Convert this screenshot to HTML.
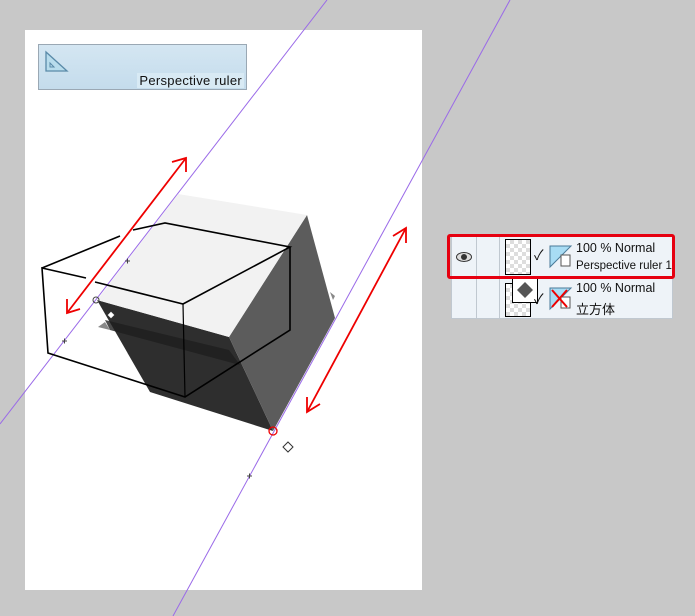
<!DOCTYPE html>
<html><head><meta charset="utf-8"><style>
body{margin:0;width:695px;height:616px;background:#c8c8c8;overflow:hidden;position:relative;font-family:"Liberation Sans","Noto Sans CJK JP",sans-serif}
.canvas{position:absolute;left:25px;top:30px;width:397px;height:560px;background:#fff}
svg{position:absolute;left:0;top:0}
.ruler{position:absolute;left:38px;top:44px;width:207px;height:44px;border:1px solid #9aa8b4;background:linear-gradient(#d4e6f2,#c4dcec)}
.ruler span{position:absolute;right:2px;bottom:1px;font-size:13px;color:#111;letter-spacing:.3px;background:#d8eaf4;padding:0 2px}
.panel{position:absolute;left:451px;top:234px;width:220px;height:83px;background:#eef3f8;border:1px solid #c0c8d0}
.row{position:absolute;left:0;width:220px}
.col{position:absolute;top:0;bottom:0;border-left:1px solid #c0c8d0}
.t{position:absolute;font-size:12.5px;color:#111;white-space:nowrap}
.chk{background:linear-gradient(45deg,#ddd 25%,transparent 25%,transparent 75%,#ddd 75%),linear-gradient(45deg,#ddd 25%,#fff 25%,#fff 75%,#ddd 75%);background-size:8px 8px;background-position:0 0,4px 4px}
</style></head><body>
<div class="canvas"></div>
<div class="ruler"><svg width="30" height="30" style="left:4px;top:4px"><path d="M3 3 L3 22 L24 22 Z" fill="#b8dcec" stroke="#5a8aa8" stroke-width="1.3"/><path d="M7 14 L7 18 L11 18 Z" fill="none" stroke="#5a8aa8"/></svg><span>Perspective ruler</span></div>
<svg width="695" height="616">
<line x1="327" y1="0" x2="0" y2="424" stroke="#9a6ae8" stroke-width="1"/>
<line x1="510" y1="0" x2="173" y2="616" stroke="#9a6ae8" stroke-width="1"/>
<polygon points="97,300 229,337 273,431 150,392" fill="#2e2e2e"/>
<polygon points="105,320 229,350 240,365 110,330" fill="#1e1e1e" opacity=".8"/>
<polygon points="98,327 105,322 110,330" fill="#888"/>
<polygon points="307,215 335,318 273,431 229,337" fill="#5c5c5c"/>
<polygon points="178,194 307,215 229,337 97,300" fill="#f2f2f2"/>
<polygon points="330,292 335,296 333,300" fill="#888"/>
<g fill="none" stroke="#000" stroke-width="1.6">
<polyline points="42,268 120,236"/><polyline points="133,230 165,223 290,247 183,304 95,282"/><polyline points="86,278 42,268 48,353 185,397 290,330 290,247"/>
<line x1="183" y1="304" x2="185" y2="397" stroke-width="1.2"/>
</g>
<g stroke="#e00" stroke-width="1.8" fill="none">
<line x1="67" y1="313" x2="186" y2="158"/><polyline points="172,162 186,158 186,172"/><polyline points="67,299 67,313 80,309"/>
<line x1="307" y1="412" x2="406" y2="228"/><polyline points="393,236 406,228 406,243"/><polyline points="307,397 307,412 320,404"/>
</g>
<circle cx="273" cy="431" r="4" fill="none" stroke="#e00" stroke-width="1.3"/>
<circle cx="96" cy="300" r="3" fill="none" stroke="#444"/>
<path d="M111 311 l4 4 -4 4 -4 -4z M288 442 l5 5 -5 5 -5 -5z" fill="#fff" stroke="#333"/>
<g stroke="#444"><path d="M125 261h5M127.5 258.5v5 M62 341h5M64.5 338.5v5 M247 476h5M249.5 473.5v5"/></g>
</svg>
<div class="panel">
<div class="col" style="left:24px"></div><div class="col" style="left:47px"></div>
<div style="position:absolute;left:0;top:43px;width:220px;border-top:1px solid #c0c8d0"></div>
<svg width="20" height="14" style="left:3px;top:15px"><ellipse cx="9" cy="7" rx="7.5" ry="4.5" fill="#ddd" stroke="#333"/><circle cx="9" cy="7" r="3" fill="#333"/></svg>
<div class="chk" style="position:absolute;left:53px;top:4px;width:24px;height:34px;border:1px solid #000"></div>
<div class="chk" style="position:absolute;left:53px;top:48px;width:24px;height:32px;border:1px solid #000"></div>
<div style="position:absolute;left:60px;top:42px;width:24px;height:24px;background:#fff;border:1px solid #000"><svg width="24" height="24"><path d="M12 4 L20 12 L12 20 L4 12Z" fill="#555"/></svg></div>
<div class="t" style="left:82px;top:10px;font-size:14px">✓</div><div class="t" style="left:82px;top:54px;font-size:14px">✓</div>
<svg width="24" height="28" style="left:97px;top:8px"><path d="M1 3 L22 3 L1 24Z" fill="#a8dcf4" stroke="#4a7a98"/><rect x="12" y="12" width="9" height="11" fill="#fff" stroke="#555"/></svg>
<svg width="24" height="28" style="left:97px;top:50px"><path d="M1 3 L22 3 L1 24Z" fill="#a8dcf4" stroke="#4a7a98"/><rect x="12" y="12" width="9" height="11" fill="#fff" stroke="#555"/><path d="M3 5 L18 22 M18 5 L3 22" stroke="#e00" stroke-width="2"/></svg>
<div class="t" style="left:124px;top:6px">100 % Normal</div>
<div class="t" style="left:124px;top:25px;font-size:11.5px">Perspective ruler 1</div>
<div class="t" style="left:124px;top:46px">100 % Normal</div>
<div class="t" style="left:124px;top:64px;font-size:13px">立方体</div>
</div>
<div style="position:absolute;left:447px;top:234px;width:222px;height:39px;border:3px solid #e60010;border-radius:3px"></div>
</body></html>
